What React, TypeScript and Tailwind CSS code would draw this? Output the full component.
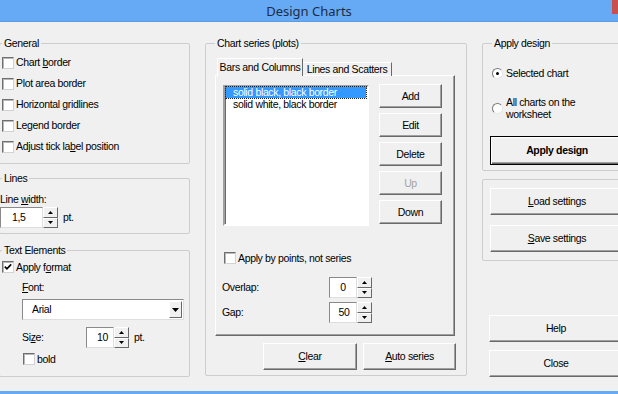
import React from "react";

const Check = ({ checked = false }: { checked?: boolean }) => (
  <span className="relative inline-block w-[12px] h-[12px] shrink-0 bg-white border border-t-[#6f6f6f] border-l-[#6f6f6f] border-r-[#d2d2d2] border-b-[#d2d2d2] shadow-[inset_1px_1px_0_#b8b8b8]">
    {checked && (
      <svg viewBox="0 0 10 10" className="absolute left-0 top-0 w-[10px] h-[10px]">
        <path d="M1.8 4.6 L3.9 6.8 L8.2 2.4" stroke="#000" strokeWidth="1.7" fill="none" />
      </svg>
    )}
  </span>
);

const Radio = ({ checked = false }: { checked?: boolean }) => (
  <span className="relative inline-block w-[11px] h-[11px] shrink-0 rounded-full bg-white border border-t-[#7a7a7a] border-l-[#7a7a7a] border-r-[#e6e6e6] border-b-[#e6e6e6]">
    {checked && <span className="absolute left-[3px] top-[3px] w-[3px] h-[3px] rounded-full bg-black" />}
  </span>
);

const Btn = ({
  children,
  className = "",
  disabled = false,
}: {
  children: React.ReactNode;
  className?: string;
  disabled?: boolean;
}) => (
  <div
    className={`flex items-center justify-center bg-[#f0f0f0] border border-t-white border-l-white border-r-[#696969] border-b-[#696969] shadow-[inset_-1px_-1px_0_#a0a0a0] ${
      disabled ? "text-[#a3a3a3]" : "text-black"
    } ${className}`}
  >
    {children}
  </div>
);

const Spin = () => (
  <div className="flex flex-col w-[15px] h-[21px] shrink-0">
    <div className="flex-1 flex items-center justify-center bg-[#f0f0f0] border border-t-white border-l-white border-r-[#696969] border-b-[#696969]">
      <svg width="5" height="3" viewBox="0 0 5 3">
        <path d="M0 3 L2.5 0 L5 3Z" fill="#000" />
      </svg>
    </div>
    <div className="flex-1 flex items-center justify-center bg-[#f0f0f0] border border-t-white border-l-white border-r-[#696969] border-b-[#696969]">
      <svg width="5" height="3" viewBox="0 0 5 3">
        <path d="M0 0 L5 0 L2.5 3Z" fill="#000" />
      </svg>
    </div>
  </div>
);

const Box = ({ children, className = "" }: { children: React.ReactNode; className?: string }) => (
  <div
    className={`h-[21px] shrink-0 bg-white border border-t-[#8a8a8a] border-l-[#8a8a8a] border-r-[#dedede] border-b-[#dedede] flex items-center ${className}`}
  >
    {children}
  </div>
);

const CheckRow = ({ children, checked = false }: { children: React.ReactNode; checked?: boolean }) => (
  <div className="h-[21px] flex items-center gap-[2px]">
    <Check checked={checked} />
    <span>{children}</span>
  </div>
);

export default function App() {
  return (
    <div className="w-[618px] h-[394px] overflow-hidden bg-[#f0f0f0] flex flex-col font-['Liberation_Sans',Arial,sans-serif] text-[10.5px] leading-[13px] tracking-[-0.35px] text-black">
      {/* Title bar */}
      <div className="relative h-[22px] shrink-0 bg-[#66a9f4] border-b border-[#5e9be0] flex items-center justify-center">
        <span className="font-['Noto_Sans',sans-serif] text-[13px] leading-[18px] text-[#1d2d43] tracking-normal">
          Design Charts
        </span>
        <div className="absolute right-0 top-0 w-[6px] h-[14px] bg-[#c9504d]" />
      </div>

      {/* Body */}
      <div className="flex-1 flex items-start">
        {/* Left column */}
        <div className="ml-[-1px] w-[191px] shrink-0 flex flex-col">
          <fieldset className="mt-[15px] h-[127px] border border-[#cdcdcd] rounded-[2px]">
            <legend className="ml-[2px] px-[2px]">General</legend>
            <div className="pt-[2px] pl-[2px] flex flex-col">
              <CheckRow>
                Chart <u>b</u>order
              </CheckRow>
              <CheckRow>Plot area border</CheckRow>
              <CheckRow>
                Horizontal <u>g</u>ridlines
              </CheckRow>
              <CheckRow>
                Le<u>g</u>end border
              </CheckRow>
              <CheckRow>
                Adjust tick la<u>b</u>el position
              </CheckRow>
            </div>
          </fieldset>

          <fieldset className="mt-[8px] h-[62px] border border-[#cdcdcd] rounded-[2px]">
            <legend className="ml-[2px] px-[2px]">Lines</legend>
            <div className="mt-[8px]">
              Line <u>w</u>idth:
            </div>
            <div className="mt-[1px] flex items-center">
              <Box className="w-[43px] pl-[11px]">1,5</Box>
              <Spin />
              <span className="ml-[5px]">pt.</span>
            </div>
          </fieldset>

          <fieldset className="mt-[10px] h-[133px] border border-[#cdcdcd] rounded-[2px]">
            <legend className="ml-[2px] px-[2px]">Text Elements</legend>
            <div className="pl-[2px] h-[20px] flex items-center gap-[2px]">
              <Check checked />
              <span>
                Apply f<u>o</u>rmat
              </span>
            </div>
            <div className="mt-[4px] pl-[22px]">
              <u>F</u>ont:
            </div>
            <div className="mt-[5px] ml-[22px] w-[162px] h-[21px] bg-white border border-t-[#8a8a8a] border-l-[#8a8a8a] border-r-[#dedede] border-b-[#dedede] flex items-center justify-between">
              <span className="pl-[9px]">Arial</span>
              <div className="mr-[1px] w-[13px] h-[17px] flex items-center justify-center bg-[#f0f0f0] border border-t-white border-l-white border-r-[#696969] border-b-[#696969]">
                <svg width="7" height="4" viewBox="0 0 7 4">
                  <path d="M0 0 L7 0 L3.5 4Z" fill="#000" />
                </svg>
              </div>
            </div>
            <div className="mt-[7px] h-[21px] pl-[22px] flex items-center">
              <span className="w-[64px]">
                Si<u>z</u>e:
              </span>
              <Box className="w-[28px] justify-end pr-[5px]">10</Box>
              <Spin />
              <span className="ml-[5px]">pt.</span>
            </div>
            <div className="mt-[1px] h-[20px] pl-[23px] flex items-center gap-[2px]">
              <Check />
              <span>bold</span>
            </div>
          </fieldset>
        </div>

        {/* Middle column */}
        <fieldset className="ml-[15px] mt-[15px] w-[262px] h-[339px] shrink-0 border border-[#cdcdcd] rounded-[2px]">
          <legend className="ml-[9px] px-[2px]">Chart series (plots)</legend>
          <div className="mt-[8px] ml-[11px] h-[18px] flex items-end">
            <div className="relative z-10 w-[86px] h-[18px] bg-[#f0f0f0] border-t border-l border-r border-t-white border-l-white border-r-[#696969] flex items-center justify-center">
              Bars and Columns
            </div>
            <div className="w-[89px] h-[14px] border-t border-r border-t-white border-r-[#696969] flex items-center justify-center">
              Lines and Scatters
            </div>
          </div>
          <div className="mt-[-1px] ml-[9px] w-[240px] h-[261px] border border-t-white border-l-white border-r-[#696969] border-b-[#696969] shadow-[inset_-1px_-1px_0_#a0a0a0]">
            <div className="mt-[9px] ml-[7px] flex items-start">
              <div className="w-[146px] h-[141px] bg-white border-2 border-t-[#a0a0a0] border-l-[#a0a0a0] border-r-white border-b-white shadow-[inset_1px_1px_0_#696969]">
                <div className="pl-[1px] pr-[1px]">
                  <div className="h-[11px] leading-[11px] pl-[7px] bg-[#3399ff] text-white outline outline-1 outline-dotted outline-[#222]">
                    solid black, black border
                  </div>
                  <div className="h-[11px] leading-[11px] mt-[1px] pl-[7px]">solid white, black border</div>
                </div>
              </div>
              <div className="ml-[10px] mt-[-1px] flex flex-col gap-[5px] w-[63px]">
                <Btn className="h-[24px]">Add</Btn>
                <Btn className="h-[24px]">Edit</Btn>
                <Btn className="h-[24px]">Delete</Btn>
                <Btn className="h-[24px]" disabled>
                  Up
                </Btn>
                <Btn className="h-[24px]">Down</Btn>
              </div>
            </div>
            <div className="mt-[22px] h-[20px] pl-[8px] flex items-center gap-[2px]">
              <Check />
              <span>Apply by points, not series</span>
            </div>
            <div className="mt-[9px] h-[21px] pl-[6px] flex items-center">
              <span className="w-[107px]">Overlap:</span>
              <Box className="w-[28px] justify-center">0</Box>
              <Spin />
            </div>
            <div className="mt-[4px] h-[21px] pl-[6px] flex items-center">
              <span className="w-[107px]">Gap:</span>
              <Box className="w-[28px] justify-center pl-[2px]">50</Box>
              <Spin />
            </div>
          </div>
          <div className="mt-[7px] ml-[57px] flex gap-[6px]">
            <Btn className="w-[94px] h-[27px]">
              <span>
                <u>C</u>lear
              </span>
            </Btn>
            <Btn className="w-[93px] h-[27px]">
              <span>
                <u>A</u>uto series
              </span>
            </Btn>
          </div>
        </fieldset>

        {/* Right column */}
        <div className="ml-[15px] w-[150px] shrink-0 flex flex-col">
          <fieldset className="mt-[15px] h-[134px] border border-[#cdcdcd] rounded-[2px]">
            <legend className="ml-[9px] px-[2px]">Apply design</legend>
            <div className="mt-[13px] h-[20px] pl-[9px] flex items-center gap-[3px]">
              <Radio checked />
              <span>Selected chart</span>
            </div>
            <div className="mt-[14px] pl-[9px] flex items-center gap-[3px]">
              <Radio />
              <span className="leading-[11.5px]">
                All charts on the
                <br />
                worksheet
              </span>
            </div>
            <div className="mt-[16px] mx-[7px] h-[29px] flex items-center justify-center font-bold bg-[#f0f0f0] border border-black shadow-[inset_1px_1px_0_#fff,inset_-1px_-1px_0_#696969,inset_-2px_-2px_0_#a0a0a0]">
              Apply design
            </div>
          </fieldset>
          <fieldset className="mt-[8px] h-[82px] border border-[#cdcdcd] rounded-[2px]">
            <Btn className="mt-[8px] mx-[7px] h-[27px]">
              <span>
                <u>L</u>oad settings
              </span>
            </Btn>
            <Btn className="mt-[10px] mx-[7px] h-[27px]">
              <span>
                <u>S</u>ave settings
              </span>
            </Btn>
          </fieldset>
          <Btn className="mt-[54px] ml-[7px] w-[134px] h-[27px]">Help</Btn>
          <Btn className="mt-[8px] ml-[7px] w-[134px] h-[27px]">Close</Btn>
        </div>
      </div>

      {/* Bottom frame */}
      <div className="h-[3px] shrink-0 bg-[#66a9f4]" />
    </div>
  );
}
